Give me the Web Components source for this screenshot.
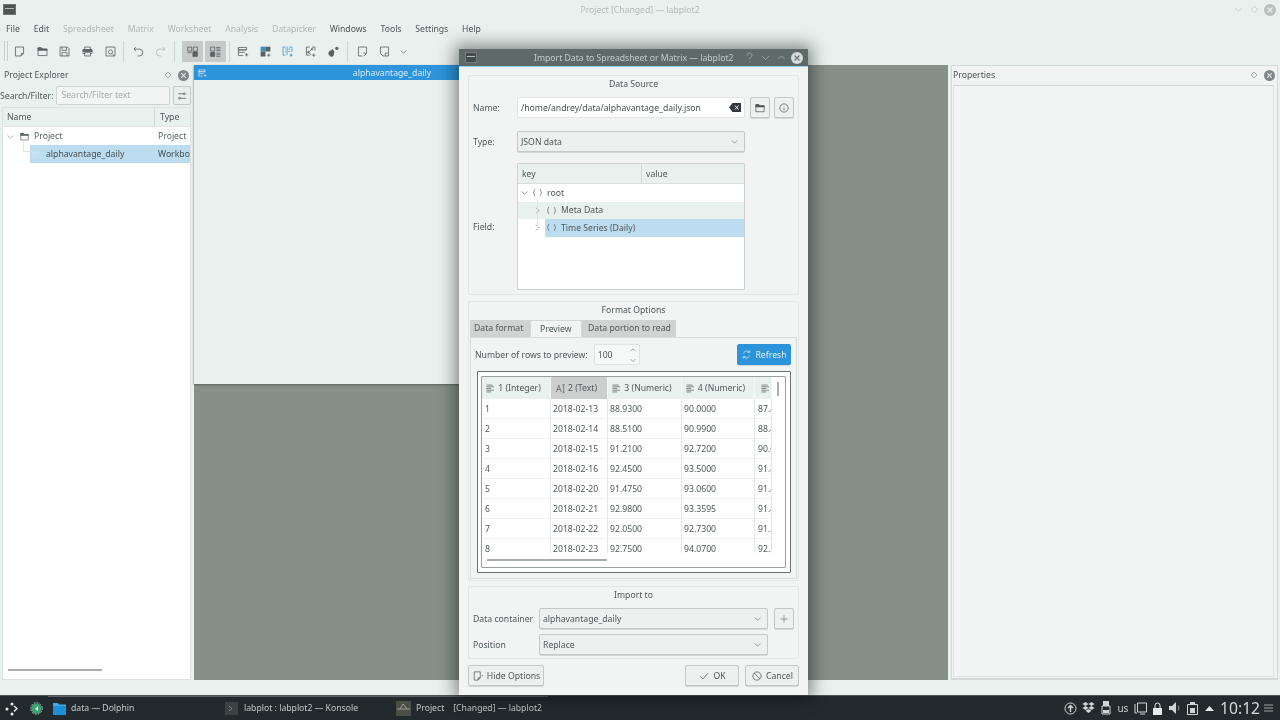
<![CDATA[<!DOCTYPE html>
<html lang="en"><head><meta charset="utf-8"><title>labplot2</title>
<style>
html,body{margin:0;padding:0;width:1280px;height:720px;overflow:hidden;background:#e9f1ee;font:8.67px "Noto Sans",sans-serif;color:#50585a}
</style></head><body>
<lp-desktop>
  <lp-main-window></lp-main-window>
  <lp-import-dialog></lp-import-dialog>
  <lp-taskbar></lp-taskbar>
</lp-desktop>
<script>
const ICONS={
 'new':'<path d="M3 2.500h10v8l-3 3H3zM10 13.500v-3h3"/>',
 open:'<path d="M2.500 3.500h4l1 1.500h6v8h-11z"/><path d="M2.500 3.500h4l1 1.500h6v1.500h-11z" fill="currentColor"/>',
 save:'<path d="M2.500 2.500h9l2 2v9h-11zM5 2.500v4h5.500v-4M5 13.500v-4.500h6v4.500"/>',
 print:'<path d="M4.500 5.500v-3h7v3M4.500 10.500h-2v-5h11v5h-2M4.500 9v4.500h7V9z"/><path d="M2.500 6h11v2h-11z" fill="currentColor"/>',
 preview:'<path d="M2.500 2.500h11v11h-11z"/><circle cx="8" cy="8.500" r="2.500"/><path d="M10 10.500l3 3"/>',
 undo:'<path d="M5 2.500L2.500 5 5 7.500M2.500 5H9a4 4 0 0 1 0 8.500H7"/>',
 redo:'<path d="M11 2.500L13.500 5 11 7.500M13.500 5H7a4 4 0 0 0 0 8.500h2"/>',
 cascade:'<path d="M2 2.500h5v5H2zM9 2.500h5v5H9zM2 9.500h5"/><path d="M8.500 8.500h5.500v5.500H8.500z" fill="currentColor"/>',
 tile:'<path d="M2 2.500h5v5H2zM9 3h5M9 5h5M9 7h5M9 10h5M9 12h5M9 14h5"/><path d="M2 9h5v5H2z" fill="currentColor"/>',
 book:'<path d="M3 3h10v3H3zM3 3v10M3 6h10M3 9h8M3 13h6M11 12h4M13 10v4"/>',
 matrix:'<path d="M2 2h6v6H2z" fill="#3d8fc4" stroke="none"/><path d="M8 2h6v6H8zM2 8h6v6H2z" fill="currentColor" stroke="none"/><path d="M10 12.500h4M12 10.500v4"/>',
 grid:'<path d="M2.500 2.500h3M2.500 2.500v10h3M10 2.500h3.500v6M7.500 2v10M5 5h1M9 5h2M5 8h1M9 8h2M10.500 12.500h4M12.500 10.500v4" stroke="#3d8fc4"/>',
 work:'<path d="M7 2.500H3v10h4M10 2.500h3.500V7M5 9l5-4M5 9l4 3M10 12.500h4M12 10.500v4"/><circle cx="5" cy="9" r="1"/><circle cx="10" cy="5" r="1"/>',
 pick:'<path d="M3 13a3.500 3.500 0 0 1 1-6L7 5l2 3-.5 4a3 3 0 0 1-5.500 1z" fill="currentColor" stroke="none"/><circle cx="12" cy="4" r="2" fill="currentColor" stroke="none"/>',
 note:'<path d="M3 2.500h10v7M3 2.500v11h5M13 10l-3 3.500M9 10h4v0"/>',
 note2:'<path d="M3 2.500h10v11h-7l-3-3zM9 10v3M9 10h3"/>',
 chev:'<path d="M4 6.500l4 4 4-4"/>',
 chevr:'<path d="M6 4l4 4-4 4"/>',
 up:'<path d="M4 10l4-4 4 4"/>',
 diamond:'<path d="M8 4l4 4-4 4-4-4z"/>',
 tune:'<path d="M3 5h7M12.500 5h1M3 11h1M6.500 11h7"/><circle cx="11" cy="5" r="1.200"/><circle cx="5" cy="11" r="1.200"/>',
 folder:'<path d="M2.500 3.500h4l1 1.500h6v8h-11z"/><path d="M2.500 3.500h4l1 1.500h6v1.500h-11z" fill="currentColor"/>',
 sheet:'<path d="M3 3h10v10H3zM3 6h10M3 9.500h10M6.500 6v7"/>',
 info:'<circle cx="8" cy="8" r="5.500"/><path d="M8 7.500v3.500M8 5v1"/>',
 braces:'<path d="M4.500 3C2.500 3 4 7.500 1.800 8c2.200.5.700 5 2.700 5M11.500 3c2 0 .5 4.500 2.700 5-2.200.5-.7 5-2.700 5"/>',
 refresh:'<path d="M3.500 6.500A5 5 0 0 1 12 4.500M12.500 9.500A5 5 0 0 1 4 11.500M12.500 2v3h-3M3.500 14v-3h3"/>',
 num:'<path d="M2 3h9M2 5.500h11M2 8h7M2 10.500h11M2 13h7"/>',
 text:'<path d="M2 13L5.500 3 9 13M3.200 9.500h4.600M11 2.500h3M12.500 2.500v11M11 13.500h3"/>',
 plus:'<path d="M8 3v10M3 8h10"/>',
 check:'<path d="M3 8.500l3.500 3.500L13 4.500"/>',
 cancel:'<circle cx="8" cy="8" r="5.500"/><path d="M4.200 4.200l7.600 7.600"/>',
 hide:'<path d="M3 2.500h8v8l-3 3H3zM8 13.500v-3h3M13 7.500h1.500"/>',
 q:'<path d="M5 5.500a3 3 0 1 1 4.500 2.600C8.500 8.800 8 9.300 8 10.500M8 12.500v1"/>'
};
function def(name,css,html,init){
  customElements.define(name,class extends HTMLElement{
    constructor(){super();const r=this.attachShadow({mode:'open'});
      r.innerHTML='<style>'+css+'</style>'+(typeof html==='function'?html(this):html);}
    connectedCallback(){
      if(typeof html==='function'){this.shadowRoot.innerHTML='<style>'+css+'</style>'+html(this);}
      if(init)init(this);
    }
  });
}
def('lp-icon',':host{display:inline-flex;width:var(--s,14px);height:var(--s,14px);flex:none}svg{width:100%;height:100%;fill:none;stroke:currentColor;stroke-width:1}',
  h=>'<svg viewBox="0 0 16 16" aria-hidden="true">'+(ICONS[h.getAttribute('name')]||'')+'</svg>');
def('lp-close',':host{display:inline-block;width:var(--d,12px);height:var(--d,12px);flex:none}svg{display:block;width:100%;height:100%}',
  ()=>'<svg viewBox="0 0 12 12"><circle cx="6" cy="6" r="6" fill="var(--c,#8a8f8f)"/><path d="M3.500 3.500l5 5M8.500 3.500l-5 5" stroke="var(--x,#dfe5e3)" stroke-width="1.100"/></svg>');

def('lp-btn',`:host{display:inline-flex;align-items:center;justify-content:center;gap:3px;box-sizing:border-box;height:21px;border:1px solid #c3c9c7;border-radius:2px;background:#ecf1ef;color:#50585a;box-shadow:0 1px 0 #d3d8d6;font:8.67px "Noto Sans",sans-serif;white-space:nowrap}
 :host([primary]){background:#2d94dc;border-color:#2d94dc;color:#dff0fb}`,'<slot></slot>');
def('lp-combo',`:host{display:flex;align-items:center;box-sizing:border-box;height:21px;padding:0 4px 0 3px;border:1px solid #c3c9c7;border-radius:2px;background:#ecf1ef;box-shadow:0 1px 0 #d3d8d6;color:#50585a;font:8.67px "Noto Sans",sans-serif}
 span{flex:1}lp-icon{--s:11px;color:#6a7272}`,'<span><slot></slot></span><lp-icon name="chev"></lp-icon>');
def('lp-group',`:host{display:block;box-sizing:border-box;border:1px solid #e2e6e4;border-radius:2px;background:#f1f4f3}
 h4{margin:0;font:8.67px "Noto Sans",sans-serif;color:#50585a;text-align:center;height:var(--th,17px);line-height:17px}`,
 h=>'<h4>'+h.getAttribute('label')+'</h4><slot></slot>');

def('lp-desktop',':host{display:flex;flex-direction:column;position:relative;width:1280px;height:720px;overflow:hidden;filter:blur(.3px)}','<slot></slot>');

def('lp-main-window',`:host{display:flex;flex-direction:column;height:695px;background:#e9f1ee;color:#50585a}
 .title{height:19px;flex:none;display:flex;align-items:center;padding:0 3px;position:relative;color:#b4bcb9}
 .title .t{position:absolute;left:0;right:0;text-align:center}
 .appicon{width:13px;height:11px;background:#4d5553;border:1px solid #6d7371;box-sizing:border-box;position:relative}
 .appicon:after{content:"";position:absolute;left:1px;right:1px;top:3px;border-top:1px solid #b6bbb9}
 .wb{margin-left:auto;display:flex;align-items:center;gap:3px;--s:13px;color:#bcc5c2;padding-right:1px}
 .wb lp-close{--d:12px;--c:#b9c1be;--x:#e9f1ee}
 .menu{height:20px;flex:none;display:flex;align-items:center;gap:13.800px;padding:0 6px;color:#4f5759}
 .menu .d{color:#b0b8b5}
 .tools{height:26px;box-sizing:border-box;padding:0 0 2px 4px;flex:none;display:flex;align-items:center;color:#5a6264;--s:13px}
 .tools .hd{width:2px;height:20px;border-left:1px solid #c8cfcc;border-right:1px solid #c8cfcc}
 .tools .i{width:22.600px;height:21px;display:flex;align-items:center;justify-content:center;flex:none}
 .tools .on{background:#c6cbc9;border-radius:1px;width:21px;margin:0 1px 0 .800px}
 .tools .sep{width:1px;height:21px;background:#ccd3d0;margin:0 2px;flex:none}
 .tools .sm{--s:11px;width:14px}
 .body{flex:1;display:flex;min-height:0}
 .mdi{width:754px;margin:0 3px 0 2px;background:#859089;flex:none}
 .sub{width:396px;height:319px;background:#e9f1ee;box-shadow:0 1px 2px #5a625d}
 .subt{height:15px;background:#2d94dc;color:#d8ecfa;display:flex;align-items:center;position:relative;padding-left:3px;--s:10px}
 .subt span{position:absolute;left:0;right:0;text-align:center}
 .status{height:15px;flex:none}`,
 `<div class="title"><div class="appicon"></div><div class="t">Project [Changed] — labplot2</div>
   <div class="wb"><lp-icon name="chev"></lp-icon><lp-icon name="diamond"></lp-icon><lp-close></lp-close></div></div>
  <div class="menu"><span>File</span><span>Edit</span><span class="d">Spreadsheet</span><span class="d">Matrix</span><span class="d">Worksheet</span><span class="d">Analysis</span><span class="d">Datapicker</span><span>Windows</span><span>Tools</span><span>Settings</span><span>Help</span></div>
  <div class="tools"><div class="hd"></div>
   <div class="i"><lp-icon name="new"></lp-icon></div><div class="i" style="margin-left:.500px"><lp-icon name="open"></lp-icon></div><div class="i"><lp-icon name="save"></lp-icon></div><div class="i"><lp-icon name="print"></lp-icon></div><div class="i"><lp-icon name="preview"></lp-icon></div>
   <div class="sep" style="margin-right:2.500px"></div>
   <div class="i"><lp-icon name="undo"></lp-icon></div><div class="i" style="color:#b4bbb8"><lp-icon name="redo"></lp-icon></div>
   <div class="sep"></div>
   <div class="i on" style="margin-left:5px"><lp-icon name="cascade"></lp-icon></div><div class="i on"><lp-icon name="tile"></lp-icon></div>
   <div class="sep" style="margin-right:1px"></div>
   <div class="i"><lp-icon name="book"></lp-icon></div><div class="i" style="margin-left:.500px"><lp-icon name="matrix"></lp-icon></div><div class="i"><lp-icon name="grid"></lp-icon></div><div class="i"><lp-icon name="work"></lp-icon></div><div class="i" style="margin-left:.500px"><lp-icon name="pick"></lp-icon></div>
   <div class="sep" style="margin-right:3px"></div>
   <div class="i"><lp-icon name="note"></lp-icon></div><div class="i"><lp-icon name="note2"></lp-icon></div><div class="i sm"><lp-icon name="chev"></lp-icon></div>
  </div>
  <div class="body"><lp-project-dock></lp-project-dock>
   <div class="mdi"><div class="sub"><div class="subt"><lp-icon name="book"></lp-icon><span>alphavantage_daily</span></div></div></div>
   <lp-properties-dock></lp-properties-dock></div>
  <div class="status"></div>`);

const dockCss=`.head{height:20px;box-sizing:border-box;display:flex;align-items:center;gap:4px;padding-left:3px;padding-right:3px;color:#50585a}
 .head span{flex:1}.head lp-icon{--s:12px;color:#8b9391}.head lp-close{--d:11px;--c:#7f8686;--x:#e4e9e7}`;
def('lp-project-dock',`:host{display:block;width:192px;height:615px;flex:none;box-sizing:border-box;padding-left:1px}
 ${dockCss}
 .search{display:flex;align-items:center;height:21px;gap:2px;margin-left:-1px;box-sizing:border-box}
 .inp{width:114px;height:19px;box-sizing:border-box;border:1px solid #cdd3d1;border-radius:2px;background:#f1f5f3;color:#a7aeab;padding:0 4px;line-height:17px;margin-left:1px}
 .tb{width:18px;height:19px;box-sizing:border-box;border:1px solid #c3c9c7;border-radius:2px;display:flex;align-items:center;justify-content:center;color:#50585a;--s:12px;background:#e9efed;margin-left:1px}
 .tree{height:573px;margin:1px 0 0 1px;width:189px;box-sizing:border-box;background:#fff;border:1px solid #dde2e0;position:relative;overflow:hidden}
 .th{height:19px;box-sizing:border-box;background:#e9f1ee;display:flex;align-items:center;border-bottom:1px solid #e0e5e3}
 .th div:first-child{width:152px;padding-left:4px;box-sizing:border-box;border-right:1px solid #d3d9d7;height:100%;line-height:19px}
 .th div+div{padding-left:5px}
 .r{height:18px;display:flex;align-items:center;position:relative}
 .r .ty{position:absolute;left:155px;right:0;overflow:hidden;white-space:nowrap}
 .r lp-icon{--s:11px}
 .sel{background:#bcdcef;margin-left:27px;padding-left:16px;color:#465052;--s:11px}
 .sel .ty{left:128px}
 .sel lp-icon{position:absolute;left:1px;color:#d3e6f1}
 .line{position:absolute;left:20px;top:34px;width:7px;height:9px;border:solid #dfe4e2;border-width:0 0 1px 1px}
 .sb{position:absolute;left:5px;bottom:8px;width:94px;height:2px;background:#a9adac}`,
 `<div class="head"><span>Project Explorer</span><lp-icon name="diamond"></lp-icon><lp-close></lp-close></div>
  <div class="search"><span>Search/Filter:</span><div class="inp">Search/Filter text</div><div class="tb"><lp-icon name="tune"></lp-icon></div></div>
  <div class="tree"><div class="th"><div>Name</div><div>Type</div></div>
   <div class="r" style="padding-left:2px;gap:2px;color:#5a6264"><lp-icon name="chev" style="color:#8b9391"></lp-icon><lp-icon name="folder" style="margin-left:1px"></lp-icon><span style="margin-left:2px">Project</span><span class="ty">Project</span></div>
   <div class="r sel"><lp-icon name="book"></lp-icon><span>alphavantage_daily</span><span class="ty">Workbook</span></div>
   <div class="line"></div><div class="sb"></div></div>`);
def('lp-properties-dock',`:host{display:block;height:615px;flex:none;box-sizing:border-box;background:#f1f4f3;border:1px solid #d4d9d7;width:327px;border-bottom-width:2px}
 ${dockCss}
 .head{padding-right:2px;padding-left:1px;height:19px;padding-bottom:1px}
 .head lp-icon{color:#8b9391}
 .p{height:592px;margin:0 1px;border:1px solid #dfe3e1;border-top:1px solid #d0d5d3;background:#f3f5f4;width:321px;box-sizing:border-box}`,
 `<div class="head"><span>Properties</span><lp-icon name="diamond"></lp-icon><lp-close></lp-close></div><div class="p"></div>`);

def('lp-data-source',`:host{display:grid;grid-template-columns:44px 228px 20px 20px;column-gap:0;padding:4px 4px 0;align-items:center;font:8.67px "Noto Sans",sans-serif;color:#50585a}
 label{grid-column:1}
 .edit{height:21px;box-sizing:border-box;background:#fff;border:1px solid #e0e4e2;border-radius:2px;display:flex;align-items:center;padding:0 3px;justify-content:space-between;color:#4a5254;white-space:nowrap}
 .edit svg{width:12px;height:9px;flex:none}
 lp-btn{width:20px;--s:12px}
 .a{margin-left:5px}.b{margin-left:9px}
 .tree{grid-column:2;height:127px;box-sizing:border-box;border:1px solid #cfd4d2;background:#fff;border-radius:1px;margin-top:11px;overflow:hidden;position:relative}
 .th{display:flex;height:20px;box-sizing:border-box;background:#e9f1ee;align-items:center;border-bottom:1px solid #d9dedc}
 .th div{padding-left:4px;box-sizing:border-box;height:100%;line-height:21px}
 .th div:first-child{width:124px;border-right:1px solid #d3d9d7}
 .row{height:17.500px;display:flex;align-items:center;--s:11px;white-space:nowrap}
 .row lp-icon[name=chev],.row lp-icon[name=chevr]{color:#5d6565}
 .row span{margin-left:4px}
 .alt{background:#e9f1ee}
 .sel{background:#bcdcef;margin-left:27px;--s:11px}
 .vline{position:absolute;left:19px;top:35px;height:30px;border-left:1px solid #dfe4e2}
 .fl{grid-column:1;grid-row:3;margin-top:12px}`,
 `<label>Name:</label><div class="edit"><span>/home/andrey/data/alphavantage_daily.json</span><svg viewBox="0 0 12 9"><path d="M3.500 0H12v9H3.500L0 4.500z" fill="#333a3c"/><path d="M6 2.500l3.500 4M9.500 2.500L6 6.500" stroke="#eee" stroke-width="1"/></svg></div>
  <lp-btn class="a"><lp-icon name="folder"></lp-icon></lp-btn><lp-btn class="b"><lp-icon name="info"></lp-icon></lp-btn>
  <label style="margin-top:13px">Type:</label><lp-combo style="margin-top:13px;grid-column:2">JSON data</lp-combo>
  <label class="fl">Field:</label>
  <div class="tree"><div class="th"><div>key</div><div>value</div></div>
    <div class="row" style="padding-left:1px"><lp-icon name="chev"></lp-icon><lp-icon name="braces" style="margin-left:2px"></lp-icon><span>root</span></div>
    <div class="row alt" style="padding-left:14px"><lp-icon name="chevr"></lp-icon><lp-icon name="braces" style="margin-left:3px"></lp-icon><span>Meta Data</span></div>
    <div class="row" style="padding-left:14px;position:relative"><lp-icon name="chevr"></lp-icon><div class="row sel" style="position:absolute;left:0;right:0;top:0;height:100%;padding-left:1px"><lp-icon name="braces"></lp-icon><span>Time Series (Daily)</span></div></div>
    <div class="vline"></div></div>`);

const ROWS=[['1','2018-02-13','88.9300','90.0000','87.8700'],['2','2018-02-14','88.5100','90.9900','88.4100'],['3','2018-02-15','91.2100','92.7200','90.6200'],['4','2018-02-16','92.4500','93.5000','91.8000'],['5','2018-02-20','91.4750','93.0600','91.8000'],['6','2018-02-21','92.9800','93.3595','91.4500'],['7','2018-02-22','92.0500','92.7300','91.3600'],['8','2018-02-23','92.7500','94.0700','92.3000']];
def('lp-preview-table',`:host{display:block;box-sizing:border-box;width:314px;height:202px;border:1px solid #6b7070;border-radius:1px;padding:4px 4px 4px 3px;background:#fff;margin:0 auto 0 2px}
 .in{position:relative;height:192px;border:1px solid #9aa09e;border-radius:1px;overflow:hidden;box-sizing:border-box}
 .g{display:grid;grid-template-columns:69px 57px 74px 73px 17px;grid-template-rows:22px;grid-auto-rows:20px;width:290px;overflow:hidden;height:176px;color:#50585a}
 .h{height:22px;background:#e9f1ee;display:flex;align-items:center;justify-content:center;gap:2px;--s:11px;border-right:1px solid #f5f7f6;box-sizing:border-box;white-space:nowrap;overflow:hidden;padding-right:6px}
 .h.a{background:#cdcfce}
 .h.e{justify-content:flex-start;padding:0 0 0 5px}
 .c{padding-left:2px;border-right:1px solid #e3e7e5;border-bottom:1px solid #eff1f0;box-sizing:border-box;line-height:21px;white-space:nowrap;overflow:hidden}
 .c:nth-child(5n+1){padding-left:3px}
 .c:nth-child(5n){padding-left:3px}
 .v{position:absolute;right:6px;top:5px;width:2px;height:14px;background:#a9adac}
 .s{position:absolute;left:5px;bottom:6px;width:120px;height:2px;background:#a9adac}`,
 ()=>`<div class="in"><div class="g">
   <div class="h"><lp-icon name="num"></lp-icon>1 (Integer)</div><div class="h a"><lp-icon name="text"></lp-icon>2 (Text)</div><div class="h"><lp-icon name="num"></lp-icon>3 (Numeric)</div><div class="h"><lp-icon name="num"></lp-icon>4 (Numeric)</div><div class="h e"><lp-icon name="num"></lp-icon></div>
   ${ROWS.map(r=>r.map(c=>'<div class="c">'+c+'</div>').join('')).join('')}
  </div><div class="v"></div><div class="s"></div></div>`);
def('lp-format-tabs',`:host{display:block;padding:0 1px;font:8.67px "Noto Sans",sans-serif;color:#50585a}
 .tabs{display:flex;height:17px}
 .t{background:#cfd4d2;padding:0 4px;line-height:17px;box-sizing:border-box;border-radius:1px 1px 0 0;white-space:nowrap}
 .t.on{background:#f1f4f3;border:1px solid #d4d9d7;border-bottom:0;padding:0 9px;line-height:16px;width:52px}
 .t.l{padding:0 5px 0 6px;width:94px}
 .t.f{width:60px}
 .p{height:242px;width:327px;box-sizing:border-box;border:1px solid #d9dedc;padding:6px 5px 0 4px;background:#f1f4f3}
 .r{display:flex;align-items:center;height:21px;margin-bottom:6px}
 .spin{width:46px;height:21px;margin-left:6px;box-sizing:border-box;border:1px solid #dfe3e1;border-radius:2px;background:#f7f9f8;display:flex;align-items:center;padding:0 1px 0 3px;justify-content:space-between}
 .arr{display:flex;flex-direction:column;--s:10px;color:#6b7373}
 lp-btn{margin-left:auto;width:54px;--s:11px}`,
 `<div class="tabs"><div class="t f">Data format</div><div class="t on">Preview</div><div class="t l">Data portion to read</div></div>
  <div class="p"><div class="r"><span>Number of rows to preview:</span><div class="spin"><span>100</span><div class="arr"><lp-icon name="up"></lp-icon><lp-icon name="chev"></lp-icon></div></div><lp-btn primary><lp-icon name="refresh"></lp-icon>Refresh</lp-btn></div>
  <lp-preview-table></lp-preview-table></div>`);
def('lp-import-to',`:host{display:grid;grid-template-columns:66px 229px 20px;column-gap:0;row-gap:5px;padding:4px 4px 0;align-items:center;font:8.67px "Noto Sans",sans-serif;color:#50585a}
 lp-btn{width:20px;margin-left:6px;--s:12px;color:#7b8382}`,
 `<label>Data container</label><lp-combo>alphavantage_daily</lp-combo><lp-btn><lp-icon name="plus"></lp-icon></lp-btn>
  <label>Position</label><lp-combo>Replace</lp-combo>`);
def('lp-import-dialog',`:host{position:absolute;left:459px;top:49px;width:349px;height:646px;background:#f1f4f3;box-shadow:0 0 16px 4px rgba(0,0,0,.45);z-index:2;display:flex;flex-direction:column;color:#50585a}
 .tb{height:17px;flex:none;background:#5e6a68;color:#c3cbc8;display:flex;align-items:center;padding:0 5px 0 6px;position:relative;border-bottom:1px solid #9ed0ee;box-sizing:content-box}
 .ai{width:12px;height:11px;background:#454c4b;border:1px solid #767d7b;box-sizing:border-box;position:relative}
 .ai:after{content:"";position:absolute;left:1px;right:1px;top:3px;border-top:1px solid #b6bbb9}
 .tt{position:absolute;left:75px;white-space:nowrap}
 .wb{margin-left:auto;display:flex;align-items:center;gap:3px;--s:13px;color:#aab2b0}
 .wb lp-close{--d:12px;--c:#d5dbd9;--x:#6b7674}
 .c{flex:1;padding:8px 9px 0;display:flex;flex-direction:column}
 .g1{height:220px}.g2{height:280px;margin-top:6px;--th:18px}.g3{height:73px;margin-top:5px}
 .f{display:flex;margin-top:6px;gap:6px}
 .f lp-btn{--s:12px}`,
 `<div class="tb"><div class="ai"></div><span class="tt">Import Data to Spreadsheet or Matrix — labplot2</span><div class="wb"><lp-icon name="q"></lp-icon><lp-icon name="chev"></lp-icon><lp-icon name="up"></lp-icon><lp-close></lp-close></div></div>
  <div class="c">
   <lp-group class="g1" label="Data Source"><lp-data-source></lp-data-source></lp-group>
   <lp-group class="g2" label="Format Options"><lp-format-tabs></lp-format-tabs></lp-group>
   <lp-group class="g3" label="Import to"><lp-import-to></lp-import-to></lp-group>
   <div class="f"><lp-btn style="width:76px"><lp-icon name="hide"></lp-icon>Hide Options</lp-btn><lp-btn style="width:54px;margin-left:auto"><lp-icon name="check"></lp-icon>OK</lp-btn><lp-btn style="width:54px"><lp-icon name="cancel"></lp-icon>Cancel</lp-btn></div>
  </div>`);

def('lp-taskbar',`:host{display:flex;align-items:center;height:25px;flex:none;background:#232a2e;color:#c1c8c8;box-sizing:border-box;border-top:1px solid #4d5357;font:8.67px "Noto Sans",sans-serif;position:relative}
 .lnch{width:24px;display:flex;justify-content:center;flex:none}
 .gear{width:24px;display:flex;justify-content:center;flex:none}
 .tasks{display:flex;align-items:center;height:100%;box-shadow:inset 0 1px 0 #5b6165}
 .t{display:flex;align-items:center;gap:5px;white-space:pre;height:100%;box-sizing:border-box;padding-left:5px}
 svg{display:block;flex:none}
 .tray{margin-left:auto;display:flex;align-items:center;--s:12px;color:#c8cece}
 .tray>*{flex:none}
 .clock{font-size:15.700px;color:#d4dada;margin-left:2px;width:41px;font-family:"Noto Sans",sans-serif}
 .i{width:17.300px;display:flex;justify-content:center;font-size:10px}`,
 `<div class="lnch"><svg width="15" height="15" viewBox="0 0 15 15" fill="#e7ebeb"><circle cx="2" cy="8" r="1.500"/><circle cx="7" cy="3" r="1.500"/><path d="M9.500 4.500l3.500 3-3.500 3.500-1-1 2.500-2.500-2.500-2z"/><circle cx="7" cy="13" r="1.500"/></svg></div>
  <div class="gear"><svg width="13" height="13" viewBox="0 0 13 13"><circle cx="6.500" cy="6.500" r="5.200" fill="#3ea074"/><circle cx="6.500" cy="6.500" r="5.800" fill="none" stroke="#bfcac6" stroke-dasharray="1.500 1.500"/><path d="M5 7l3-3v5z" fill="#d6eee3"/></svg></div>
  <div class="tasks">
   <div class="t" style="width:175px;padding-left:5px"><svg width="13" height="13" viewBox="0 0 13 13"><path d="M0 1h5l1 1.500h7V13H0z" fill="#3daee9"/><path d="M0 4h13v9H0z" fill="#1d8fd6"/></svg><span>data — Dolphin</span></div>
   <div class="t" style="width:170px;padding-left:2px"><svg width="13" height="13" viewBox="0 0 13 13"><rect width="13" height="13" fill="#3b4244"/><path d="M4 4l3 2.500L4 9" stroke="#7c8484" fill="none"/></svg><span style="margin-left:1px">labplot : labplot2 — Konsole</span></div>
   <div class="t" style="width:155px;padding-left:3px"><svg width="15" height="15" viewBox="0 0 15 15"><rect width="15" height="15" fill="#4a4f48"/><path d="M1 8h13M4 8l3-5 4 5" stroke="#98a08f" fill="none"/></svg><span>Project    [Changed] — labplot2</span></div>
  </div>
  <div class="tray">
   <div class="i"><svg width="13" height="13" viewBox="0 0 13 13" fill="none" stroke="#d0d6d6"><circle cx="6.500" cy="6.500" r="5.500"/><path d="M6.500 10V3.500M4 6l2.500-2.500L9 6" stroke-width="1.500"/></svg></div>
   <div class="i"><svg width="13" height="12" viewBox="0 0 13 12" fill="#d0d6d6"><path d="M3.500 0L6.500 2 3.500 4 .5 2zM9.500 0l3 2-3 2-3-2zM3.500 4l3 2-3 2-3-2zM9.500 4l3 2-3 2-3-2zM3.500 8.800L6.500 7l3 1.800-3 2.200z"/></svg></div>
   <div class="i"><svg width="10" height="14" viewBox="0 0 10 14"><path d="M2 0h6v5H2z" fill="#d0d6d6"/><path d="M1 5h8v8H1z" fill="none" stroke="#d0d6d6"/><path d="M2 9h6v3H2z" fill="#d0d6d6"/></svg></div>
   <div class="i">us</div>
   <div class="i"><svg width="13" height="13" viewBox="0 0 13 13" fill="none" stroke="#d0d6d6"><path d="M3.500 1h9v9h-9zM1 2v9h2M6 12h5"/></svg></div>
   <div class="i"><svg width="11" height="13" viewBox="0 0 11 13"><path d="M1 6h9v7H1z" fill="#e7ebeb"/><path d="M3 6V3.500a2.500 2.500 0 0 1 5 0V6" fill="none" stroke="#e7ebeb"/></svg></div>
   <div class="i"><svg width="11" height="12" viewBox="0 0 11 12" fill="#d0d6d6"><path d="M0 4h3l4-4v12L3 8H0z"/><path d="M9 3.500a4 4 0 0 1 0 5" fill="none" stroke="#8f9696"/></svg></div>
   <div class="i"><svg width="11" height="13" viewBox="0 0 11 13"><path d="M.5 2.500h10v10H.5z" fill="none" stroke="#d0d6d6"/><path d="M3 0h5v3H3zM3 6h5v5H3z" fill="#d0d6d6"/></svg></div>
   <div class="i"><svg width="9" height="5" viewBox="0 0 9 5" fill="#e7ebeb"><path d="M0 5l4.500-5L9 5z"/></svg></div>
   <div class="clock">10:12</div>
   <div style="width:19px;box-sizing:border-box;padding-left:3px;display:flex;justify-content:flex-start"><svg width="9" height="8" viewBox="0 0 9 8" stroke="#9ba2a2"><path d="M0 1h9M0 4h9M0 7h9"/></svg></div>
  </div>`);
</script>
</body></html>]]>
